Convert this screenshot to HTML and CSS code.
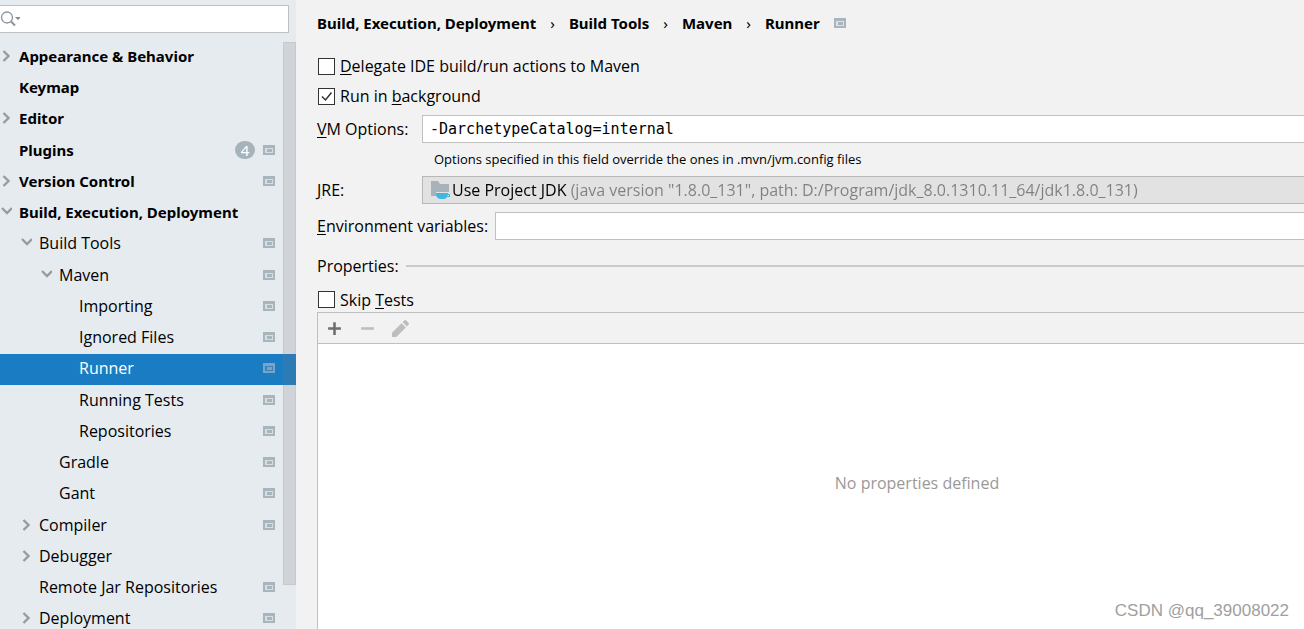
FILE: index.html
```html
<!DOCTYPE html>
<html lang="en">
<head>
  <meta charset="UTF-8">
  <meta name="viewport" content="width=device-width, initial-scale=1.0">
  <title>Settings - Maven Runner</title>
  <link rel="stylesheet" href="styles.css">
</head>
<body>
  <!-- shared icons -->
  <svg class="icon-defs" aria-hidden="true">
    <symbol id="right" viewBox="0 0 12 14"><path d="M3.500 2 L8.500 7 L3.500 12" fill="none" stroke="#999b9d" stroke-width="2.400"/></symbol>
    <symbol id="down" viewBox="0 0 12 14"><path d="M2 3 L7 8 L12 3" fill="none" stroke="#999b9d" stroke-width="2.400"/></symbol>
    <symbol id="project" viewBox="0 0 12 10"><path fill-rule="evenodd" d="M0 0H12V10H0Z M2 3V8H10V3Z"/><path d="M2 3H10V8H2Z" opacity="0.250"/><path d="M4 4H9V7H4Z"/></symbol>
  </svg>

  <div class="settings">
    <aside class="sidebar">
      <div class="search">
        <svg class="search-icon" viewBox="0 0 20 16" aria-hidden="true">
          <circle cx="7" cy="6.500" r="5.500" fill="none" stroke="#8a949c" stroke-width="1.300"/>
          <path d="M11 10.500L15 14.500" stroke="#8a949c" stroke-width="2"/>
          <path d="M15 6h6l-3 3z" fill="#7f8b91"/>
        </svg>
        <input type="search" aria-label="Search settings">
      </div>

      <nav class="tree-pane">
        <ul class="tree">
          <li><a class="top" href="#"><svg class="arrow"><use href="#right"/></svg>Appearance &amp; Behavior</a></li>
          <li><a class="top" href="#"><span class="arrow"></span>Keymap</a></li>
          <li><a class="top" href="#"><svg class="arrow"><use href="#right"/></svg>Editor</a></li>
          <li><a class="top" href="#"><span class="arrow"></span>Plugins<span class="count">4</span><svg class="project"><use href="#project"/></svg></a></li>
          <li><a class="top" href="#"><svg class="arrow"><use href="#right"/></svg>Version Control<svg class="project"><use href="#project"/></svg></a></li>
          <li><a class="top" href="#"><svg class="arrow"><use href="#down"/></svg>Build, Execution, Deployment</a></li>
          <li><a class="level-1" href="#"><svg class="arrow"><use href="#down"/></svg>Build Tools<svg class="project"><use href="#project"/></svg></a></li>
          <li><a class="level-2" href="#"><svg class="arrow"><use href="#down"/></svg>Maven<svg class="project"><use href="#project"/></svg></a></li>
          <li><a class="level-3" href="#"><span class="arrow"></span>Importing<svg class="project"><use href="#project"/></svg></a></li>
          <li><a class="level-3" href="#"><span class="arrow"></span>Ignored Files<svg class="project"><use href="#project"/></svg></a></li>
          <li><a class="level-3 selected" href="#"><span class="arrow"></span>Runner<svg class="project"><use href="#project"/></svg></a></li>
          <li><a class="level-3" href="#"><span class="arrow"></span>Running Tests<svg class="project"><use href="#project"/></svg></a></li>
          <li><a class="level-3" href="#"><span class="arrow"></span>Repositories<svg class="project"><use href="#project"/></svg></a></li>
          <li><a class="level-2" href="#"><span class="arrow"></span>Gradle<svg class="project"><use href="#project"/></svg></a></li>
          <li><a class="level-2" href="#"><span class="arrow"></span>Gant<svg class="project"><use href="#project"/></svg></a></li>
          <li><a class="level-1" href="#"><svg class="arrow"><use href="#right"/></svg>Compiler<svg class="project"><use href="#project"/></svg></a></li>
          <li><a class="level-1" href="#"><svg class="arrow"><use href="#right"/></svg>Debugger</a></li>
          <li><a class="level-1" href="#"><span class="arrow"></span>Remote Jar Repositories<svg class="project"><use href="#project"/></svg></a></li>
          <li><a class="level-1" href="#"><svg class="arrow"><use href="#right"/></svg>Deployment<svg class="project"><use href="#project"/></svg></a></li>
        </ul>
        <div class="scroll-thumb"></div>
      </nav>
    </aside>

    <main class="content">
      <nav class="breadcrumb">
        <a href="#">Build, Execution, Deployment</a>
        <span>›</span>
        <a href="#">Build Tools</a>
        <span>›</span>
        <a href="#">Maven</a>
        <span>›</span>
        <a href="#">Runner</a>
        <svg class="project"><use href="#project"/></svg>
      </nav>

      <form class="options">
        <div class="check-row">
          <input type="checkbox" id="delegate">
          <label for="delegate"><u>D</u>elegate IDE build/run actions to Maven</label>
        </div>
        <div class="check-row">
          <input type="checkbox" id="background" checked>
          <label for="background">Run in <u>b</u>ackground</label>
        </div>

        <div class="field-row vm-row">
          <label for="vm"><u>V</u>M Options:</label>
          <input type="text" id="vm" value="-DarchetypeCatalog=internal">
        </div>
        <p class="hint">Options specified in this field override the ones in .mvn/jvm.config files</p>

        <div class="field-row">
          <label for="jre"><u>J</u>RE:</label>
          <div class="jre-box">
            <svg class="jdk-icon" viewBox="0 0 20 18" aria-hidden="true">
              <path d="M0 0h7l2 3h9v8H5v4H0z" fill="#a7b2ba"/>
              <path d="M5 12h12v1h2v3h-3q-1 2-3 2h-3q-4 0-5-4z" fill="#40b6e0"/>
              <path d="M16.500 14h1.500v1h-1.500z" fill="#e2e2e2"/>
            </svg>
            <select id="jre">
              <option>Use Project JDK (java version "1.8.0_131", path: D:/Program/jdk_8.0.1310.11_64/jdk1.8.0_131)</option>
            </select>
          </div>
        </div>

        <div class="field-row env-row">
          <label for="env"><u>E</u>nvironment variables:</label>
          <input type="text" id="env">
        </div>

        <h2 class="section-title">Properties:</h2>

        <div class="check-row">
          <input type="checkbox" id="skip">
          <label for="skip">Skip <u>T</u>ests</label>
        </div>

        <section class="properties">
          <div class="toolbar">
            <button type="button" aria-label="Add"><svg viewBox="0 0 16 16"><path d="M8 2v12M2 8h12" stroke="#6e6e6e" stroke-width="2.400"/></svg></button>
            <button type="button" aria-label="Remove" disabled><svg viewBox="0 0 16 16"><path d="M2 8h12" stroke="#bdbdbd" stroke-width="2.400"/></svg></button>
            <button type="button" aria-label="Edit" disabled><svg viewBox="0 0 16 16"><path d="M0 16v-4L9 3l4 4-9 9zM10 2l1.500-1.500q1-1 2 0l2 2q1 1 0 2L14 6z" fill="#bdbdbd"/></svg></button>
          </div>
          <p class="empty">No properties defined</p>
        </section>
      </form>
    </main>
  </div>
  <div class="watermark">CSDN @qq_39008022</div>
</body>
</html>
```
FILE: styles.css
```css
* {
  box-sizing: border-box;
}

body {
  margin: 0;
  font-family: "Open Sans", "Noto Sans", sans-serif;
  font-size: 16px;
  line-height: 20px;
  color: #000;
  background-color: #f2f2f2;
  overflow: hidden;
}

a {
  color: inherit;
  text-decoration: none;
}

u {
  text-underline-offset: 2px;
}

.icon-defs {
  display: none;
}

.settings {
  display: flex;
  height: 100vh;
}

/* left side */
.sidebar {
  flex: 0 0 296px;
  display: flex;
  flex-direction: column;
  background-color: #e6ebf0;
  overflow: hidden;
}

.search {
  display: flex;
  align-items: center;
  flex: none;
  height: 28px;
  margin: 5px 7px 9px 0;
  background-color: #fff;
  border: 1px solid #c0c0c0;
  border-left: none;
}

.search-icon {
  width: 20px;
  height: 16px;
  flex: none;
}

.search input {
  flex: 1;
  min-width: 0;
  border: none;
  outline: none;
  background: none;
  font: inherit;
}

.tree-pane {
  position: relative;
  flex: 1;
  min-height: 0;
}

.tree {
  list-style: none;
  margin: 0;
  padding: 0;
}

.tree li:nth-child(4n) {
  padding-top: 1px;
}

.tree a {
  display: flex;
  align-items: center;
  height: 31px;
  padding-right: 21px;
  padding-bottom: 3px;
}

.tree .top,
.breadcrumb {
  font-family: "Noto Sans", sans-serif;
  font-size: 15px;
  font-weight: bold;
}

.level-1 {
  padding-left: 20px;
}

.level-2 {
  padding-left: 40px;
}

.level-3 {
  padding-left: 60px;
}

.tree .selected {
  color: #fff;
  background-color: #1a7dc4;
}

.arrow {
  flex: none;
  width: 12px;
  height: 14px;
  margin-right: 7px;
}

.project {
  flex: none;
  width: 12px;
  height: 10px;
  fill: #a9b5bd;
}

.tree .project {
  margin-left: auto;
}

.selected .project {
  fill: #7fa3bd;
}

.count {
  width: 20px;
  height: 18px;
  margin-left: auto;
  border-radius: 9px;
  font-weight: normal;
  line-height: 18px;
  text-align: center;
  color: #fff;
  background-color: #a7b3bb;
}

.tree .count + .project {
  margin-left: 8px;
}

.scroll-thumb {
  position: absolute;
  top: 0;
  right: 0;
  width: 13px;
  height: 543px;
  background-color: rgba(120, 115, 120, 0.2);
  border: 1px solid rgba(120, 115, 120, 0.1);
}

/* right side */
.content {
  flex: 1;
  min-width: 0;
  display: flex;
  flex-direction: column;
  padding-left: 21px;
}

.breadcrumb {
  display: flex;
  align-items: center;
  gap: 14px;
  height: 46px;
}

.breadcrumb span {
  font-weight: normal;
}

.options {
  flex: 1;
  display: flex;
  flex-direction: column;
  padding-top: 5px;
}

.check-row {
  display: flex;
  align-items: center;
  gap: 5px;
  height: 30px;
  margin-left: 1px;
}

.check-row input {
  appearance: none;
  width: 17px;
  height: 17px;
  margin: 0;
  border: 1px solid #333;
  background-color: #fff;
}

.check-row input:checked {
  background-image: url("data:image/svg+xml,%3Csvg xmlns='http://www.w3.org/2000/svg' viewBox='0 0 15 15'%3E%3Cpath d='M3 7.500L6.500 11L12.500 3.500' fill='none' stroke='%23333' stroke-width='1.500'/%3E%3C/svg%3E");
}

.field-row {
  display: flex;
  align-items: center;
}

.field-row label {
  flex: 0 0 105px;
  padding-bottom: 1px;
}

.field-row input,
.jre-box {
  flex: 1;
  min-width: 0;
  height: 28px;
  border: 1px solid #c0c0c0;
  border-right: none;
  background-color: #fff;
}

.field-row input {
  padding: 0 7px;
  font-family: "DejaVu Sans Mono", monospace;
  font-size: 15px;
}

.vm-row {
  margin-top: 4px;
}

.hint {
  margin: 6px 0 7px 117px;
  font-size: 13px;
}

.jre-box {
  display: flex;
  align-items: center;
  padding-left: 8px;
  background-color: #e2e2e2;
  border-color: #b8b8b8;
}

.jdk-icon {
  flex: none;
  width: 20px;
  height: 18px;
}

/* name of the JDK in black, its details in grey */
.jre-box select {
  appearance: none;
  flex: 1;
  min-width: 0;
  padding: 0 1px;
  border: none;
  outline: none;
  font: inherit;
  color: transparent;
  background: linear-gradient(to right, #000 117px, #808080 117px);
  background-clip: text;
}

.env-row {
  margin-top: 8px;
}

.env-row label {
  flex-basis: 178px;
}

.section-title {
  display: flex;
  align-items: center;
  gap: 7px;
  margin: 16px 0 11px;
  font-size: 16px;
  font-weight: normal;
}

.section-title::after {
  content: "";
  flex: 1;
  height: 2px;
  background-color: #cacaca;
}

.section-title + .check-row {
  height: 25px;
}

.properties {
  flex: 1;
  border: 1px solid #c0c0c0;
  border-right: none;
  border-bottom: none;
  background-color: #fff;
}

.toolbar {
  display: flex;
  align-items: center;
  gap: 16px;
  height: 31px;
  padding-left: 8px;
  border-bottom: 1px solid #c0c0c0;
  background-color: #f2f2f2;
}

.toolbar button {
  width: 17px;
  height: 17px;
  padding: 0;
  border: none;
  background: none;
}

.toolbar svg {
  display: block;
}

.empty {
  margin: 0;
  padding-top: 129px;
  padding-left: 212px;
  text-align: center;
  color: #999;
}

.watermark {
  position: absolute;
  right: 15px;
  bottom: 8px;
  font-family: "Liberation Sans", Arial, sans-serif;
  font-size: 17px;
  color: #a0a0a0;
}
```
